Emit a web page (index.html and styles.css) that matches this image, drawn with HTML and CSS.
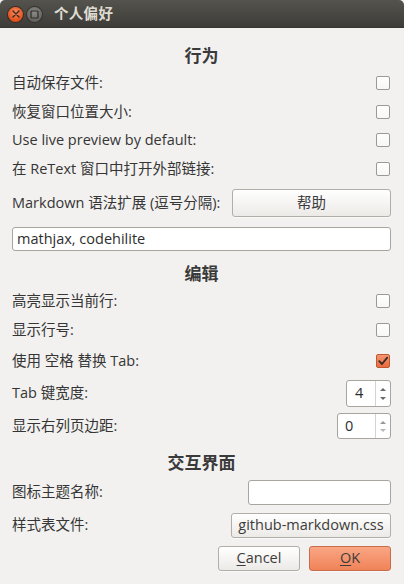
FILE: index.html
```html
<!DOCTYPE html>
<html lang="zh">
<head>
<meta charset="utf-8">
<title>个人偏好</title>
<link rel="stylesheet" href="styles.css">
</head>
<body>
<div class="window">
  <div class="titlebar">
    <span class="tb-btn tb-close">
      <svg width="8" height="8" viewBox="0 0 8 8"><path d="M1 1L7 7M7 1L1 7" stroke="#3a2620" stroke-width="1.3" stroke-linecap="round"/></svg>
    </span>
    <span class="tb-btn tb-max">
      <svg width="9" height="9" viewBox="0 0 9 9"><rect x="1" y="1" width="7" height="7" rx="1" fill="none" stroke="#2e2d2a" stroke-width="1.2"/></svg>
    </span>
    <span class="title">个人偏好</span>
  </div>

  <div class="content">
    <div class="section-title first">行为</div>
    <div class="group behaviour">
      <div class="row cbrow"><span>自动保存文件:</span><span class="check"></span></div>
      <div class="row cbrow"><span>恢复窗口位置大小:</span><span class="check"></span></div>
      <div class="row cbrow"><span>Use live preview by default:</span><span class="check"></span></div>
      <div class="row cbrow"><span>在 ReText 窗口中打开外部链接:</span><span class="check"></span></div>
    </div>
    <div class="row btnrow">
      <span>Markdown 语法扩展 (逗号分隔):</span>
      <span class="button help">帮助</span>
    </div>
    <div class="textfield ext">mathjax, codehilite</div>

    <div class="section-title">编辑</div>
    <div class="group editing">
      <div class="row cbrow r29"><span>高亮显示当前行:</span><span class="check"></span></div>
      <div class="row cbrow r29"><span>显示行号:</span><span class="check"></span></div>
      <div class="row cbrow r29 tabrow"><span>使用 空格 替换 Tab:</span>
        <span class="check checked">
          <svg width="14" height="14" viewBox="0 0 14 14"><path d="M3.2 7.2L6 10L11.2 3.6" fill="none" stroke="#3b2a22" stroke-width="1.8" stroke-linecap="round" stroke-linejoin="round"/></svg>
        </span>
      </div>
      <div class="row spinrow first-spin"><span>Tab 键宽度:</span>
        <span class="spin narrow"><span class="spin-val">4</span><span class="spin-arrows"><i class="up"></i><i class="down"></i></span></span>
      </div>
      <div class="row spinrow second-spin"><span>显示右列页边距:</span>
        <span class="spin wide"><span class="spin-val">0</span><span class="spin-arrows"><i class="up"></i><i class="down off"></i></span></span>
      </div>
    </div>

    <div class="section-title third">交互界面</div>
    <div class="row formrow"><span>图标主题名称:</span><span class="textfield theme"></span></div>
    <div class="row formrow"><span>样式表文件:</span><span class="button css">github-markdown.css</span></div>
    <div class="row dialog-buttons">
      <span class="button cancel"><u>C</u>ancel</span>
      <span class="button ok"><u>O</u>K</span>
    </div>
  </div>
</div>
</body>
</html>
```
FILE: styles.css
```css
* { box-sizing: border-box; }
html, body {
  margin: 0;
  padding: 0;
  width: 404px;
  height: 584px;
  background: #f2f1f0;
  overflow: hidden;
}
body {
  font-family: "Open Sans", "Noto Sans CJK SC", sans-serif;
  font-size: 14.5px;
  color: #353535;
}
.window {
  width: 404px;
  height: 584px;
  display: flex;
  flex-direction: column;
}
.titlebar {
  height: 28px;
  flex: none;
  display: flex;
  align-items: center;
  padding-left: 8px;
  background: linear-gradient(#55534d, #3d3c38);
  border-radius: 5px 5px 0 0;
  border-bottom: 1px solid #36352f;
}
.tb-btn {
  width: 15px;
  height: 15px;
  border-radius: 50%;
  display: flex;
  align-items: center;
  justify-content: center;
  margin-top: 1px;
}
.tb-close {
  background: radial-gradient(circle at 50% 35%, #f98a5c, #e0501d 70%, #c7431a);
  box-shadow: 0 0 0 1px #3a2a22;
}
.tb-max {
  margin-left: 4px;
  background: radial-gradient(circle at 50% 35%, #8d8b85, #65635e 70%, #55534e);
  box-shadow: 0 0 0 1px #33322e;
}
.title {
  margin-left: 12px;
  color: #dfdbd2;
  font-weight: bold;
  font-size: 14.5px;
  line-height: 20px;
  margin-top: 1px;
  letter-spacing: 0.3px;
}
.content {
  padding: 15px 13px 0 12px;
  display: flex;
  flex-direction: column;
}
.section-title {
  height: 22px;
  line-height: 25px;
  text-align: center;
  font-weight: bold;
  font-size: 17px;
  color: #3a3a3a;
  margin-top: 10px;
}
.section-title.first { margin-top: 0; }
.section-title.third { margin-top: 11px; }
.row {
  display: flex;
  align-items: center;
  justify-content: space-between;
  line-height: 20px;
  white-space: nowrap;
}
.behaviour { margin-top: 3.67px; }
.behaviour .cbrow { height: 28.67px; }
.editing { margin-top: 3.5px; }
.r29 { height: 29px; }
.tabrow { margin-top: 2px; }
.check {
  width: 14px;
  height: 14px;
  border: 1px solid #9d9a94;
  border-radius: 2px;
  background: linear-gradient(#ffffff, #f7f7f6);
  margin-right: 1px;
  display: flex;
  align-items: center;
  justify-content: center;
}
.check.checked {
  background: linear-gradient(#f49571, #e86c40);
  border-color: #c0582f;
}
.check.checked svg { margin: -1px; }
.btnrow { height: 28px; margin-top: 5.67px; }
.button {
  display: flex;
  align-items: center;
  justify-content: center;
  border: 1px solid #b1aea8;
  border-radius: 3px;
  background: linear-gradient(#ffffff, #eceae7);
  color: #3c3c3c;
  box-shadow: 0 1px 0 rgba(255,255,255,0.6);
}
.help { width: 159px; height: 28px; }
.textfield {
  background: #ffffff;
  border: 1px solid #a8a59f;
  border-radius: 3px;
  display: flex;
  align-items: center;
  padding-left: 4px;
  color: #2e2e2e;
}
.ext { height: 24px; margin-top: 10px; }
.first-spin { height: 27px; margin-top: 4.5px; }
.second-spin { height: 26px; margin-top: 6px; }
.spin {
  height: 100%;
  display: flex;
  background: #ffffff;
  border: 1px solid #a8a59f;
  border-radius: 3px;
}
.spin.narrow { width: 45px; }
.spin.wide { width: 54px; }
.spin-val {
  flex: 1;
  display: flex;
  align-items: center;
  padding-left: 8px;
  color: #2e2e2e;
}
.spin.wide .spin-val { padding-left: 7px; }
.spin-arrows {
  width: 15px;
  border-left: 1px solid #d6d4d0;
  display: flex;
  flex-direction: column;
  justify-content: space-between;
  align-items: center;
  padding: 7px 0 6px;
}
.spin-arrows i {
  display: block;
  width: 0;
  height: 0;
  border-left: 3px solid transparent;
  border-right: 3px solid transparent;
}
.spin-arrows .up { border-bottom: 3px solid #6b6965; }
.spin-arrows .down { border-top: 3px solid #6b6965; }
.spin-arrows .down.off { border-top-color: #b9b7b3; }
.second-spin .spin-arrows .up { border-bottom-color: #9a9893; }
.formrow { height: 25px; margin-top: 8px; }
.theme { width: 143px; height: 25px; }
.css { width: 160px; height: 25px; }
.dialog-buttons {
  height: 25px;
  margin-top: 8px;
  justify-content: flex-end;
  gap: 9px;
}
.cancel, .ok { width: 82px; height: 25px; }
.ok {
  background: linear-gradient(#faa685, #f08358);
  border-color: #c86d4a;
}
u { text-decoration-thickness: 1px; text-underline-offset: 2px; }
```
